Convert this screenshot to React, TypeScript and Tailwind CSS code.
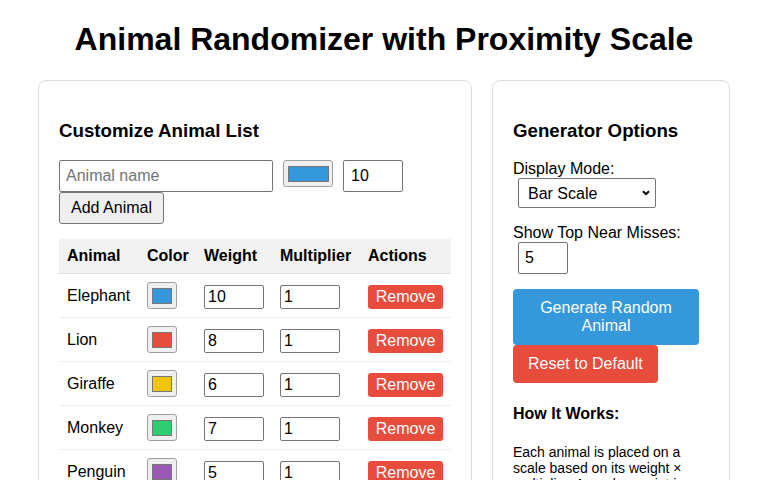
import { ChangeEvent } from 'react';

interface Animal {
  name: string;
  color: string;
  weight: number;
  multiplier: number;
}

const animals: Animal[] = [
  { name: 'Elephant', color: '#3498db', weight: 10, multiplier: 1 },
  { name: 'Lion', color: '#e74c3c', weight: 8, multiplier: 1 },
  { name: 'Giraffe', color: '#f1c40f', weight: 6, multiplier: 1 },
  { name: 'Monkey', color: '#2ecc71', weight: 7, multiplier: 1 },
  { name: 'Penguin', color: '#9b59b6', weight: 5, multiplier: 1 },
];

const cols = 'grid grid-cols-[80px_57px_76px_88px_91px]';

function ColorBox({ color, wide }: { color: string; wide?: boolean }) {
  return (
    <span
      className={`flex h-[27px] shrink-0 items-center justify-center rounded-[3px] border border-[#a0a0a0] bg-[#efefef] ${
        wide ? 'w-[50px]' : 'w-[30px]'
      }`}
    >
      <span
        className={`block h-[16px] border border-[#777] ${wide ? 'w-[41px]' : 'w-[20px]'}`}
        style={{ backgroundColor: color }}
      />
    </span>
  );
}

const noop = (_e: ChangeEvent<HTMLInputElement | HTMLSelectElement>) => {};

export default function App() {
  return (
    <div className="min-h-screen bg-white text-black leading-[normal] font-['Liberation_Sans',Arial,sans-serif] text-[16px]">
      <h1 className="my-[21.44px] text-center text-[32px] font-bold leading-[normal]">
        Animal Randomizer with Proximity Scale
      </h1>

      <div className="flex items-start gap-[20px] px-[38px]">
        {/* left: animal list */}
        <div className="w-[434px] shrink-0 rounded-lg border border-[#ddd] p-[20px]">
          <h2 className="my-[18.72px] text-[18.72px] font-bold">Customize Animal List</h2>

          <div className="mb-[15px] flex flex-wrap items-start gap-x-[10px]">
            <input
              className="h-[32px] w-[214px] rounded-[2px] border border-[#767676] px-[6px] placeholder:text-[#757575]"
              placeholder="Animal name"
              defaultValue=""
            />
            <ColorBox color="#3498db" wide />
            <input
              className="h-[32px] w-[60px] rounded-[2px] border border-[#767676] px-[7px]"
              defaultValue="10"
              onChange={noop}
            />
            <button className="h-[32px] w-[105px] rounded-[3px] border border-[#767676] bg-[#efefef] text-center">
              Add Animal
            </button>
          </div>

          <div className="w-[392px]">
            <div className={`${cols} h-[35px] items-center border-b border-[#ddd] bg-[#f2f2f2] font-bold`}>
              <div className="px-[8px]">Animal</div>
              <div className="px-[8px]">Color</div>
              <div className="px-[8px]">Weight</div>
              <div className="px-[8px]">Multiplier</div>
              <div className="px-[8px]">Actions</div>
            </div>
            {animals.map((a) => (
              <div key={a.name} className={`${cols} h-[44px] items-center border-b border-[#eee]`}>
                <div className="px-[8px]">{a.name}</div>
                <div className="flex px-[8px]">
                  <ColorBox color={a.color} />
                </div>
                <div className="flex px-[8px]">
                  <input
                    className="mt-[2px] h-[24px] w-[60px] rounded-[2px] border border-[#767676] px-[3px]"
                    defaultValue={String(a.weight)}
                  />
                </div>
                <div className="flex px-[8px]">
                  <input
                    className="mt-[2px] h-[24px] w-[60px] rounded-[2px] border border-[#767676] px-[3px]"
                    defaultValue={String(a.multiplier)}
                  />
                </div>
                <div className="flex px-[8px]">
                  <button className="mt-[2px] h-[24px] w-[76px] rounded-[3px] bg-[#e74c3c] text-white">
                    Remove
                  </button>
                </div>
              </div>
            ))}
          </div>
        </div>

        {/* right: options */}
        <div className="w-[238px] shrink-0 rounded-lg border border-[#ddd] p-[20px]">
          <h2 className="my-[18.72px] text-[18.72px] font-bold">Generator Options</h2>

          <div className="mb-[15px] flex flex-col items-start">
            <label>Display Mode:</label>
            <div className="relative mb-[1px] ml-[5px]">
              <select
                className="block h-[30px] w-[138px] appearance-none rounded-[2px] border border-[#767676] bg-white pl-[9px]"
                defaultValue="bar"
                onChange={noop}
              >
                <option value="bar">Bar Scale</option>
                <option value="circle">Circle Scale</option>
              </select>
              <svg
                className="pointer-events-none absolute right-[6px] top-[12px]"
                width="8"
                height="6"
                viewBox="0 0 8 6"
              >
                <path d="M1 1.2 L4 4.2 L7 1.2" fill="none" stroke="#000" strokeWidth="2" />
              </svg>
            </div>
          </div>

          <div className="mb-[15px] flex flex-col items-start">
            <label>Show Top Near Misses:</label>
            <input
              className="ml-[5px] h-[32px] w-[50px] rounded-[2px] border border-[#767676] px-[6px]"
              defaultValue="5"
            />
          </div>

          <div className="flex flex-col items-start">
            <button className="w-[186px] rounded-[4px] bg-[#3498db] px-[15px] py-[10px] text-center text-white">
              Generate Random Animal
            </button>
            <button className="rounded-[4px] bg-[#e74c3c] px-[15px] py-[10px] text-white">
              Reset to Default
            </button>
          </div>

          <h4 className="my-[21.28px] font-bold">How It Works:</h4>
          <p className="text-[14px] leading-[normal]">
            Each animal is placed on a scale based on its weight × multiplier. A random point is
            selected on the scale, and the animal at that point wins. The closest runners-up are shown
            as near misses.
          </p>
        </div>
      </div>
    </div>
  );
}
